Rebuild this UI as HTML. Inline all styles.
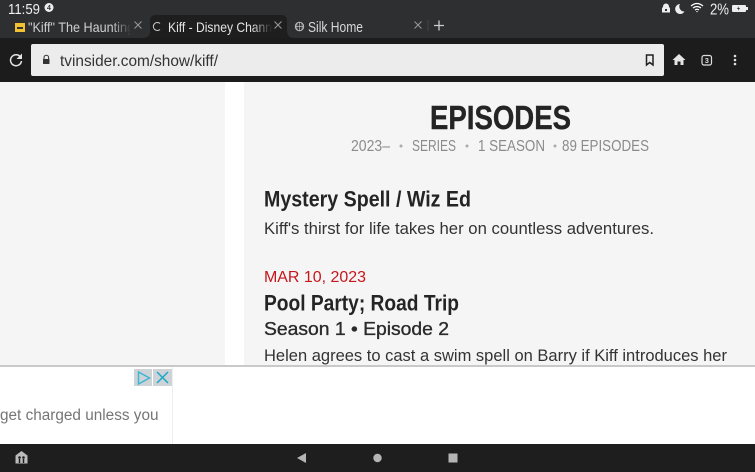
<!DOCTYPE html>
<html><head><meta charset="utf-8"><style>
html,body{margin:0;padding:0;width:755px;height:472px;overflow:hidden;background:#f5f5f5}
svg{display:block}
text{font-family:"Liberation Sans",sans-serif;white-space:pre}
</style></head><body>
<svg width="755" height="472" viewBox="0 0 755 472" xmlns="http://www.w3.org/2000/svg">
<defs>
<linearGradient id="f1" x1="0" x2="1" y1="0" y2="0"><stop offset="0" stop-color="#2e2f31" stop-opacity="0"/><stop offset="1" stop-color="#2e2f31"/></linearGradient>
<linearGradient id="f2" x1="0" x2="1" y1="0" y2="0"><stop offset="0" stop-color="#1e1e1f" stop-opacity="0"/><stop offset="1" stop-color="#1e1e1f"/></linearGradient>
</defs>
<rect width="755" height="38" fill="#2e2f31"/>
<rect y="38" width="755" height="44" fill="#1c1c1c"/>
<rect x="0" y="82" width="225" height="284" fill="#f5f5f5"/>
<rect x="225" y="82" width="19" height="284" fill="#fff"/>
<rect x="244" y="82" width="511" height="284" fill="#f5f5f5"/>

<!-- status -->
<text x="8" y="14" font-size="15" fill="#f0f0f0" textLength="32" lengthAdjust="spacingAndGlyphs">11:59</text>
<circle cx="49" cy="7.500" r="4.500" fill="#eee"/><text x="49" y="10" font-size="7" font-weight="bold" text-anchor="middle" fill="#2e2f31">4</text>
<path d="M663 6.500a3 3 0 0 1 6 0v1h1v5h-8v-5h1z" fill="#eee"/><rect x="665" y="9" width="2" height="2" fill="#2e2f31"/>
<path d="M680 4a5 5 0 1 0 4.500 7.500a5 5 0 0 1-4.500-7.500z" fill="#eee"/>
<path d="M691 6q6-5 12 0M693 8q4-3 8 0M695 10q2-1.500 4 0" stroke="#fff" stroke-width="1.200" fill="none"/><path d="M696 11l1 1.500l1-1.500z" fill="#eee"/>
<text x="710" y="14.500" font-size="16" fill="#eee" textLength="19" lengthAdjust="spacingAndGlyphs">2%</text>
<rect x="732" y="5" width="14" height="7" rx="1" fill="#eee"/><rect x="746" y="7" width="2" height="3" fill="#eee"/><path d="M739 6l-2 3h1.500l-.5 2l2-3h-1.500z" fill="#2e2f31"/>

<!-- tabs -->
<rect x="15" y="23" width="10" height="9" fill="#f1c232"/><rect x="17" y="27" width="6" height="2" fill="#333"/>
<text x="28" y="32" font-size="14" fill="#cfcfcf" textLength="106" lengthAdjust="spacingAndGlyphs">"Kiff" The Haunting</text>
<rect x="112" y="18" width="19" height="19" fill="url(#f1)"/><rect x="131" y="18" width="12" height="19" fill="#2e2f31"/>
<path d="M134.500 21.500l7 7M141.500 21.500l-7 7" stroke="#9a9a9a" stroke-width="1"/>
<path d="M143 38q6 0 7-6v-11q0-6 6-6h125q6 0 6 6v11q1 6 7 6z" fill="#1e1e1f"/>
<path d="M160 23.500a4 4 0 1 0 0 6" stroke="#ccc" stroke-width="1" fill="none"/>
<text x="168" y="32" font-size="14" fill="#e4e4e4" textLength="104" lengthAdjust="spacingAndGlyphs">Kiff - Disney Chann</text>
<rect x="252" y="18" width="20" height="18" fill="url(#f2)"/><rect x="272" y="18" width="10" height="18" fill="#1e1e1f"/>
<path d="M274.500 21.500l7 7M281.500 21.500l-7 7" stroke="#9a9a9a" stroke-width="1"/>
<circle cx="299.500" cy="26.500" r="4.200" fill="none" stroke="#bbb" stroke-width="1"/><path d="M295 26.500h9M299.500 22v9M297.500 22.500q-1.500 4 0 8M301.500 22.500q1.500 4 0 8" stroke="#bbb" stroke-width=".7" fill="none"/>
<text x="308" y="32" font-size="14.500" fill="#d8d8d8" textLength="55" lengthAdjust="spacingAndGlyphs">Silk Home</text>
<path d="M414.500 21.500l7 7M421.500 21.500l-7 7" stroke="#9a9a9a" stroke-width="1"/>
<rect x="427.500" y="20" width="1" height="11" fill="#444"/>
<path d="M434 25.500h10M439 20.500v10" stroke="#ccc" stroke-width="1.300"/>

<!-- toolbar -->
<path d="M20.500 57a5.500 5.500 0 1 0 1 4" stroke="#e4e4e4" stroke-width="1.500" fill="none"/><path d="M22 53.500v5.500h-5.500z" fill="#e4e4e4"/>
<rect x="31" y="44" width="633" height="32" rx="2" fill="#ececec"/>
<path d="M44 59v-1.500a2.300 2.300 0 0 1 4.600 0v1.500" stroke="#333" stroke-width="1" fill="none"/><rect x="43" y="59" width="6.500" height="5" rx=".5" fill="#333"/>
<text x="60" y="66" font-size="15.500" fill="#333" textLength="158" lengthAdjust="spacingAndGlyphs">tvinsider.com/show/kiff/</text>
<path d="M646.500 55h6.500v10l-3.250-2.500l-3.250 2.500z" fill="none" stroke="#222" stroke-width="1.500"/>
<path d="M679 54l-6.500 6h2v5h3v-3.500h3v3.500h3v-5h2z" fill="#e4e4e4"/>
<rect x="702" y="55.500" width="9.500" height="9.500" rx="2" fill="none" stroke="#ddd" stroke-width="1.200"/><text x="706.800" y="63" font-size="7.500" font-weight="bold" text-anchor="middle" fill="#ddd">3</text>
<circle cx="735" cy="56" r="1.300" fill="#ddd"/><circle cx="735" cy="60" r="1.300" fill="#ddd"/><circle cx="735" cy="64" r="1.300" fill="#ddd"/>

<!-- content -->
<text x="430" y="129" font-size="33" font-weight="bold" fill="#242424" stroke="#242424" stroke-width=".4" textLength="141" lengthAdjust="spacingAndGlyphs">EPISODES</text>
<g font-size="15.500" fill="#8b8b8b">
<text x="351" y="151" textLength="39" lengthAdjust="spacingAndGlyphs">2023–</text>
<text x="412" y="151" textLength="44" lengthAdjust="spacingAndGlyphs">SERIES</text>
<text x="478" y="151" textLength="67" lengthAdjust="spacingAndGlyphs">1 SEASON</text>
<text x="562" y="151" textLength="87" lengthAdjust="spacingAndGlyphs">89 EPISODES</text>
</g>
<circle cx="401" cy="146" r="1.500" fill="#aaa"/><circle cx="467" cy="146" r="1.500" fill="#aaa"/><circle cx="555" cy="146" r="1.500" fill="#aaa"/>
<text x="264" y="206.500" font-size="22" font-weight="bold" fill="#242424" textLength="207" lengthAdjust="spacingAndGlyphs">Mystery Spell / Wiz Ed</text>
<text x="264" y="234" font-size="17" fill="#333" textLength="390" lengthAdjust="spacingAndGlyphs">Kiff's thirst for life takes her on countless adventures.</text>
<text x="264" y="282" font-size="15.500" fill="#c5161c" textLength="102" lengthAdjust="spacingAndGlyphs">MAR 10, 2023</text>
<text x="264" y="310.500" font-size="22" font-weight="bold" fill="#242424" textLength="195" lengthAdjust="spacingAndGlyphs">Pool Party; Road Trip</text>
<text x="264" y="335" font-size="18.500" fill="#2a2a2a" stroke="#2a2a2a" stroke-width=".35" textLength="185" lengthAdjust="spacingAndGlyphs">Season 1 • Episode 2</text>
<text x="264" y="361" font-size="17" fill="#333" textLength="463" lengthAdjust="spacingAndGlyphs">Helen agrees to cast a swim spell on Barry if Kiff introduces her</text>

<!-- ad -->
<rect y="367" width="755" height="77" fill="#fff"/>
<rect y="365" width="755" height="2" fill="#c9c9c9"/>
<rect x="172" y="367" width="1" height="77" fill="#eee"/>
<rect x="134" y="369" width="18" height="17" fill="#cdd3d6"/><rect x="153" y="369" width="19" height="17" fill="#cdd3d6"/>
<path d="M138.500 372v12l11-6z" fill="none" stroke="#3fb6d3" stroke-width="1.500"/>
<path d="M157 372l11 11M168 372l-11 11" stroke="#1fa8cb" stroke-width="1.500"/>
<text x="0" y="420" font-size="15.500" fill="#757575" textLength="158.500" lengthAdjust="spacingAndGlyphs">get charged unless you</text>

<!-- nav -->
<rect y="444" width="755" height="28" fill="#1e1e1e"/>
<path d="M21.500 451l-6 4.500v8h12v-8z" fill="#bbb"/><path d="M19.500 463v-4M23.500 463v-4" stroke="#1e1e1e" stroke-width="1.500"/><circle cx="19.500" cy="457.500" r="1.300" fill="#1e1e1e"/><circle cx="23.500" cy="457.500" r="1.300" fill="#1e1e1e"/>
<path d="M306 453v10l-9-5z" fill="#b5b5b5"/>
<circle cx="377.500" cy="458" r="4.200" fill="#b5b5b5"/>
<rect x="448.500" y="453.500" width="9" height="9" fill="#b5b5b5"/>
</svg>
</body></html>
